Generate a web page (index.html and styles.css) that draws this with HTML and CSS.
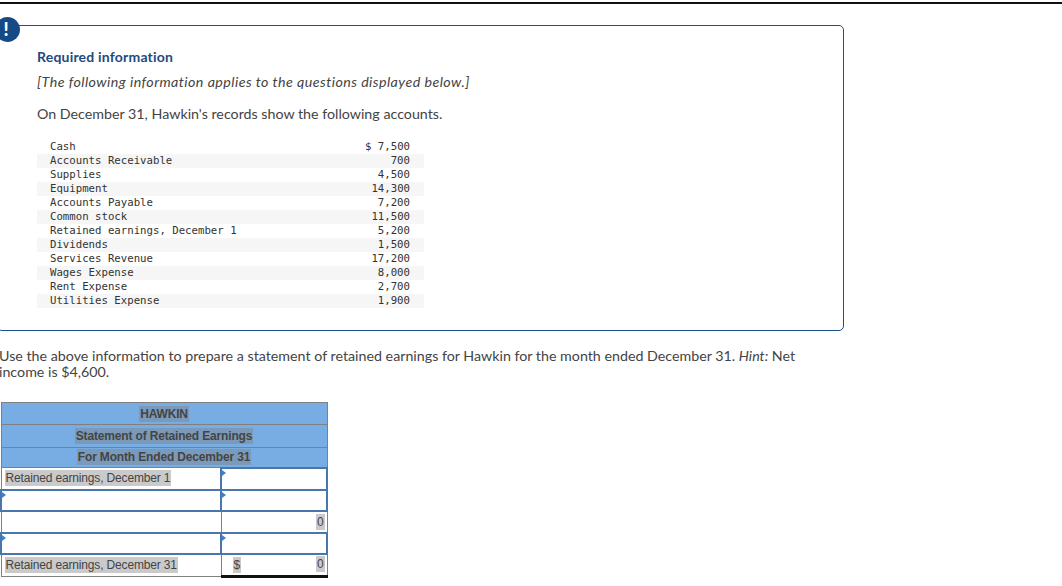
FILE: index.html
```html
<!DOCTYPE html>
<html lang="en">
<head>
<meta charset="utf-8">
<title>Required information</title>
<link rel="stylesheet" href="styles.css">
</head>
<body>
<div class="topbar"></div>
<section class="card">
  <span class="badge">!</span>
  <h2 class="title">Required information</h2>
  <p class="note">[The following information applies to the questions displayed below.]</p>
  <p class="lead">On December 31, Hawkin's records show the following accounts.</p>
  <table class="accounts">
    <tr><td>Cash</td><td class="num">$ 7,500</td></tr>
    <tr><td>Accounts Receivable</td><td class="num">700</td></tr>
    <tr><td>Supplies</td><td class="num">4,500</td></tr>
    <tr><td>Equipment</td><td class="num">14,300</td></tr>
    <tr><td>Accounts Payable</td><td class="num">7,200</td></tr>
    <tr><td>Common stock</td><td class="num">11,500</td></tr>
    <tr><td>Retained earnings, December 1</td><td class="num">5,200</td></tr>
    <tr><td>Dividends</td><td class="num">1,500</td></tr>
    <tr><td>Services Revenue</td><td class="num">17,200</td></tr>
    <tr><td>Wages Expense</td><td class="num">8,000</td></tr>
    <tr><td>Rent Expense</td><td class="num">2,700</td></tr>
    <tr><td>Utilities Expense</td><td class="num">1,900</td></tr>
  </table>
</section>
<p class="question">Use the above information to prepare a statement of retained earnings for Hawkin for the month ended December 31. <em>Hint:</em> Net income is $4,600.</p>
<table class="statement">
  <colgroup><col class="col-a"><col class="col-b"></colgroup>
  <tr class="head h1"><th colspan="2"><span class="hl">HAWKIN</span></th></tr>
  <tr class="head h2"><th colspan="2"><span class="hl">Statement of Retained Earnings</span></th></tr>
  <tr class="head h3"><th colspan="2"><span class="hl">For Month Ended December 31</span></th></tr>
  <tr class="r1"><td class="label"><span class="hl">Retained earnings, December 1</span></td><td class="input"></td></tr>
  <tr class="r2"><td class="input"></td><td class="input"></td></tr>
  <tr class="r3"><td class="label"></td><td class="amount total"><span class="hl">0</span></td></tr>
  <tr class="r4"><td class="input"></td><td class="input"></td></tr>
  <tr class="r5"><td class="label"><span class="hl">Retained earnings, December 31</span></td><td class="amount total final"><span class="hl dollar">$</span><span class="hl">0</span></td></tr>
</table>
</body>
</html>
```
FILE: styles.css
```css
* { box-sizing: border-box; }
html, body { margin: 0; padding: 0; background: #fff; overflow: hidden; }
body { width: 1062px; height: 586px; font-family: "Lato", "Liberation Sans", sans-serif; color: #444; }

.topbar { height: 2px; margin-top: 2px; background: #111; }

.card {
  position: relative;
  width: 847px;
  height: 306px;
  margin: 21px 0 0 -3px;
  padding: 23px 0 0 39px;
  border: 1px solid #1a4f8b;
  border-radius: 5px;
}
.badge {
  position: absolute;
  left: -3px;
  top: -9px;
  width: 25px;
  height: 25px;
  padding-right: 3px;
  border-radius: 50%;
  background: #164a86;
  color: #fff;
  font: 900 18px/25px "Lato", sans-serif;
  text-align: center;
}
.title { margin: 0; font-size: 14px; line-height: 16px; font-weight: 700; letter-spacing: 0.2px; color: #1c4a80; }
.note { margin: 8px 0 0; font-size: 14.25px; line-height: 17px; font-style: italic; letter-spacing: 0.44px; }
.lead { margin: 15px 0 0; font-size: 14.25px; line-height: 17px; }

.accounts {
  width: 387px;
  margin-top: 18px;
  border-collapse: collapse;
  font: 10.7px/14px "DejaVu Sans Mono", monospace;
  color: #333;
}
.accounts td { height: 14px; padding: 0 0 0 13px; white-space: nowrap; }
.accounts td.num { padding: 0 14px 0 0; text-align: right; }
.accounts tr:nth-child(even) { background: #f6f6f6; }

.question { width: 800px; margin: 17px 0 0 -1px; font-size: 14.25px; line-height: 16px; }
.question em { font-style: italic; }

.statement {
  width: 326px;
  margin: 22px 0 0 0;
  border-collapse: collapse;
  table-layout: fixed;
  font: 12px/14px "Liberation Sans", sans-serif;
  letter-spacing: -0.16px;
  color: #444;
}
.col-a { width: 220px; }
.col-b { width: 106px; }
.hl { background: rgba(128, 128, 128, 0.42); padding: 1px 1px; white-space: nowrap; }
.statement th { font-weight: 700; text-align: center; background: #78ade4; border: 1px solid #808080; padding: 0; }
.h1 th { height: 22px; }
.h2 th { height: 23px; }
.h3 th { height: 20px; }
.r1 td, .r3 td { height: 22px; }
.r2 td, .r4 td { height: 21px; }
.r5 td { height: 23px; }
.label { border: 1px solid #808080; padding: 0 3px; }
.input {
  position: relative;
  border: 2px solid #4a76ae;
  padding: 0;
}
.input::before {
  content: "";
  position: absolute;
  left: 0;
  top: 1px;
  border-left: 4px solid #3d80cf;
  border-top: 3px solid transparent;
  border-bottom: 3px solid transparent;
}
.amount { padding: 0 2px 0 0; text-align: right; border: 1px solid #808080; border-top: 2px solid #111; }
.final { border-bottom: 3px solid #111; }
.final .dollar { float: left; margin-left: 11px; }
```
